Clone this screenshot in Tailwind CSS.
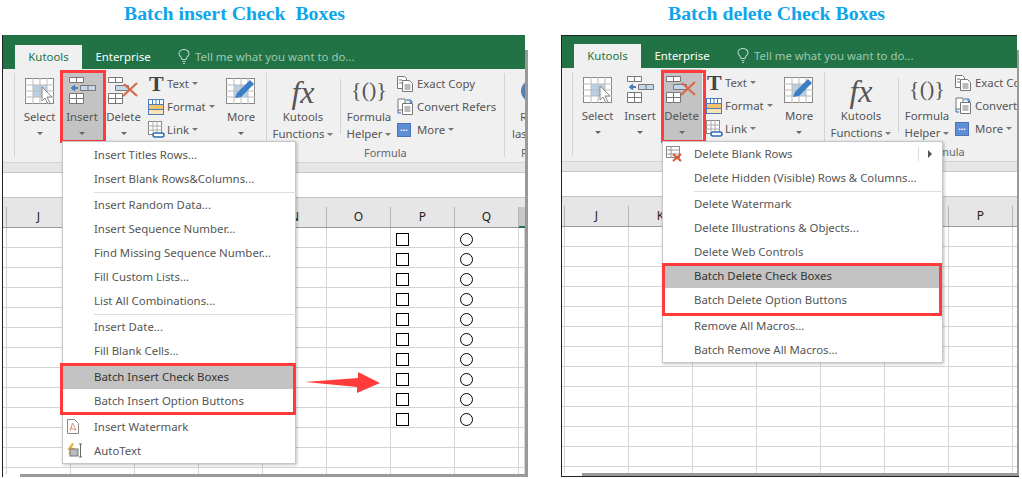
<!DOCTYPE html>
<html lang="en">
<head>
<meta charset="UTF-8">
<script src="https://cdn.jsdelivr.net/npm/@tailwindcss/browser@4"></script>
<title>Batch Check Boxes</title>
</head>
<body class="bg-white w-[1022px] h-[479px] overflow-hidden font-['Noto_Sans',sans-serif] text-[11.4px] text-[#555]">
<div class="relative flex h-[479px]">

  <!-- left half: insert -->
  <div class="w-[560px] shrink-0">
    <div class="h-[35px] pl-[124px] font-['Liberation_Serif',serif] font-bold text-[19.800px] leading-[26px] text-[#0ea5e9] whitespace-pre">Batch insert Check  Boxes</div>
    <div id="winL" class="relative ml-[2px] w-[523px] h-[439px] border-l border-[#222] bg-white overflow-hidden"></div>
    <!-- window shadow -->
    <div class="absolute left-[525px] top-[50px] w-[3px] h-[427px] bg-[#999]"></div>
    <div class="absolute left-[20px] top-[474px] w-[505px] h-[3px] bg-[#999]"></div>
    <div class="absolute left-[2px] top-[474px] w-[1px] h-[3px] bg-[#222]"></div>
  </div>

  <!-- right half: delete -->
  <div class="w-[462px] shrink-0">
    <div class="h-[35px] pl-[108px] font-['Liberation_Serif',serif] font-bold text-[19.800px] leading-[26px] text-[#0ea5e9]">Batch delete Check Boxes</div>
    <div id="winR" class="relative ml-[1px] w-[456px] h-[438px] border-l border-t border-[#222] bg-white overflow-hidden"></div>
    <div class="absolute left-[1017px] top-[50px] w-[2px] h-[426px] bg-[#999]"></div>
    <div class="absolute left-[582px] top-[473px] w-[437px] h-[3px] bg-[#999]"></div>
    <div class="absolute left-[561px] top-[473px] w-[458px] h-[4px] border-b border-[#222] border-l"></div>
  </div>

  <!-- arrow from the menu to the new controls -->
  <svg class="absolute left-[300px] top-[365px]" width="90" height="35" viewBox="300 365 90 35"><path d="M305 382 358 378V372L380 383 357 393V387Z" fill="#ff3b3b"/></svg>
</div>

<script>
  // ribbon icons
  var icoSelect = '<svg width="30" height="27" viewBox="0 0 30 27" class="ml-[1px] mt-[1px]"><rect x=".5" y=".5" width="28" height="25" fill="#fff" stroke="#888"/><rect x="8" y="7" width="14" height="12" fill="#b8cfe6"/><path d="M0 7h29M0 13h29M0 19h29M8 0v26M15 0v26M22 0v26" stroke="#bbb"/><path d="M17 9v14l3-3 3 6 2-1-3-6h5z" fill="#fff" stroke="#888"/></svg>';
  var icoInsert = '<svg width="27" height="27" viewBox="0 0 27 27" fill="#fff" stroke="#777"><path d="M.5.500h14v5H.5zM7.500 0v6"/><path d="M11.500 8.500h15v5h-15zM19 8v6" fill="#c5d7ea"/><path d="M9 11H3m3-2.500L3 11l3 2.500" stroke="#4a7ebb" stroke-width="1.800" fill="none"/><path d="M.5 16.500h14v10H.5zM.5 21.500h14M7.500 16v11"/></svg>';
  var icoDelete = '<svg width="31" height="27" viewBox="0 0 31 27" fill="#fff" stroke="#777"><path d="M.5.500h14v5H.5zM7.500 0v6"/><path d="M7.500 8.500h13v5h-13z" fill="#c5d7ea"/><path d="M.5 16.500h14v10H.5zM.5 21.500h14M7.500 16v11"/><path d="M16 7l13 12M29 6 15 19" stroke="#d9694a" stroke-width="2.200"/></svg>';
  var icoMore = '<svg width="30" height="27" viewBox="0 0 30 27" class="mt-[1px]"><rect x=".5" y=".5" width="28" height="25" fill="#fff" stroke="#888"/><rect x="8" y="7" width="14" height="12" fill="#b8cfe6"/><path d="M0 7h29M0 13h29M0 19h29M8 0v26M15 0v26M22 0v26" stroke="#bbb"/><path d="M9 20l2-5L24 2l4 4-13 13z" fill="#3a7fc4"/></svg>';
  var icoFormat = '<svg width="16" height="16" viewBox="0 0 16 16"><rect width="16" height="16" fill="#4a7ebb"/><rect x="1" y="1" width="14" height="4" fill="#fff"/><path d="M4.500 1v4M8 1v4M11.500 1v4" stroke="#4a7ebb"/><rect x="1" y="6" width="14" height="4" fill="#f5c26b"/><rect x="1" y="11" width="14" height="4" fill="#fbe3b8"/></svg>';
  var icoLink = '<svg width="17" height="17" viewBox="0 0 17 17"><rect x=".5" y=".5" width="13" height="13" fill="#fff" stroke="#888"/><path d="M5 0v14M9 0v14M0 5h14M0 9h14" stroke="#aaa"/><rect x="5" y="12" width="11" height="4" rx="2" fill="#fff" stroke="#2a6db0" stroke-width="1.500"/></svg>';
  var icoCopy = '<svg width="16" height="16" viewBox="0 0 16 16" fill="#fff" stroke="#777"><path d="M.5.500h7l2 2v10h-9z"/><path d="M5.500 4.500h7l3 3v8h-10z"/><path d="M7.500 9h6M7.500 11h6M7.500 13h6M2 4h3M2 7h3" fill="none"/></svg>';
  var icoRefs = '<svg width="16" height="17" viewBox="0 0 16 17" fill="#fff" stroke="#777"><path d="M1 1h7v11H1z"/><path d="M5.500 5.500h10v11h-10z"/><path d="M7.500 9h6M7.500 11h6M7.500 13h6" fill="none"/><path d="M9 2h5v3M12.500 3.500 14 5l1.500-1.500M1 12v3h3" stroke="#2a6db0" fill="none"/></svg>';
  var icoDots = '<span class="block w-[14px] h-[14px] bg-[#5f8ed6] border border-[#4a76b8] text-white text-[9px] leading-[11px] text-center font-bold">···</span>';
  var bulb = '<svg width="12" height="16" viewBox="0 0 12 16" fill="none" stroke="#b5d3c3" stroke-width="1.100"><path d="M4 10.500c0-2.300-3-3.300-3-5.800a5 4.200 0 0 1 10 0c0 2.500-3 3.500-3 5.800z"/><path d="M4.500 12.500h3M5 14.500h2"/></svg>';
  var caret = '<span class="inline-block w-0 h-0 border-x-[3px] border-t-[3px] border-x-transparent border-t-[#777] ml-[3px] align-middle"></span>';
  var drop = '<span class="h-[16px] flex items-center"><span class="w-0 h-0 border-x-[3px] border-t-[3px] border-x-transparent border-t-[#666]"></span></span>';

  function bigBtn(label, icon, width, on) {
    return '<div class="' + width + ' h-[73px] mt-[1px] pt-[7px] flex flex-col items-center shrink-0 ' + (on ? 'bg-[#c3c3c3]' : '') + '">' +
      '<div class="h-[32px] flex justify-center items-start">' + icon + '</div>' +
      '<span class="leading-[16px]">' + label + '</span>' + drop + '</div>';
  }
  function smallRow(icon, label, more) {
    return '<div class="h-[23px] flex items-center whitespace-nowrap"><span class="w-[20px] shrink-0">' + icon + '</span><span>' + label + '</span>' + (more ? caret : '') + '</div>';
  }
  function tallBtn(glyph, width, l1, l2) {
    return '<div class="' + width + ' h-[73px] mt-[1px] pt-[7px] flex flex-col items-center shrink-0 whitespace-nowrap">' +
      '<div class="h-[32px]">' + glyph + '</div><span class="leading-[16px]">' + l1 + '</span><span class="leading-[17px]">' + l2 + caret + '</span></div>';
  }

  function ribbon(active, pad) {
    return '<div class="h-[93px] bg-[#f0f0f0] flex items-start text-[#555] relative">' +
      '<div class="' + pad + ' h-[84px] mt-[4px] border-r border-[#d4d4d4] shrink-0"></div>' +
      '<div class="w-[3px] shrink-0"></div>' +
      bigBtn('Select', icoSelect, 'w-[43px]', false) +
      bigBtn('Insert', icoInsert, 'w-[42px]', active == 'Insert') +
      bigBtn('Delete', icoDelete, 'w-[41px]', active == 'Delete') +
      '<div class="w-[78px] mt-[3px] pl-[4px] shrink-0">' +
        '<div class="h-[23px] flex items-center"><span class="w-[19px] pl-[1px] font-[\'Liberation_Serif\',serif] font-bold text-[22px] leading-[20px] text-[#444]">T</span><span>Text</span>' + caret + '</div>' +
        '<div class="h-[23px] flex items-center"><span class="w-[19px]">' + icoFormat + '</span><span>Format</span>' + caret + '</div>' +
        '<div class="h-[23px] flex items-center"><span class="w-[19px]">' + icoLink + '</span><span>Link</span>' + caret + '</div>' +
      '</div>' +
      bigBtn('More', icoMore, 'w-[38px]', false) +
      '<div class="w-[7px] h-[84px] mt-[4px] border-r border-[#d4d4d4] shrink-0"></div>' +
      tallBtn('<span class="font-[\'Liberation_Serif\',serif] italic text-[32px] leading-[30px] text-[#555]">fx</span>', 'w-[72px]', 'Kutools', 'Functions') +
      '<div class="w-[2px] h-[55px] mt-[10px] border-r border-[#d4d4d4] shrink-0"></div>' +
      tallBtn('<span class="font-[\'Liberation_Serif\',serif] text-[22px] leading-[26px] text-[#555]">{()}</span>', 'w-[56px]', 'Formula', 'Helper') +
      '<div class="relative w-[106px] mt-[3px] shrink-0">' +
        smallRow(icoCopy, 'Exact Copy') + smallRow(icoRefs, 'Convert Refers') + smallRow(icoDots, 'More', true) +
        '<span class="absolute left-[-33px] top-[73px] leading-[16px] text-[10.900px] text-[#666]">Formula</span>' +
      '</div>' +
      '<div class="w-[2px] h-[84px] mt-[4px] border-r border-[#d4d4d4] shrink-0"></div>' +
      '<div class="relative shrink-0 w-[40px] h-[93px]">' +
        '<span class="absolute left-[16px] top-[11px] w-[24px] h-[22px] rounded-full bg-[#5a7fb5]"></span>' +
        '<span class="absolute left-[15px] top-[40px] leading-[16px]">R</span><span class="absolute left-[7px] top-[57px] leading-[16px]">las</span>' +
        '<span class="absolute left-[16px] top-[76px] leading-[16px] text-[10.900px] text-[#666]">F</span>' +
      '</div>' +
    '</div>';
  }

  function sheetHead(first, letters, selected) {
    var h = '<div class="h-[11px] bg-[#e6e6e6] border-t border-b border-t-[#d4d4d4] border-b-[#c6c6c6]"></div><div class="h-[24px] bg-white"></div>';
    h += '<div class="h-[31px] bg-[#e6e6e6] border-t border-b border-t-[#c0c0c0] border-b-[#9a9a9a] pt-[9px] flex text-[#222] leading-[20px] text-[12px]">';
    h += '<div class="' + first + ' border-r border-[#b5b5b5] shrink-0"></div>';
    letters.forEach(function (l) {
      h += '<div class="w-[64px] border-r border-[#b5b5b5] text-center shrink-0">' + l + '</div>';
    });
    if (selected) h += '<div class="grow -mb-[1px] bg-[#c8c8c8] border-b-2 border-[#217346]"></div>';
    return h + '</div>';
  }

  function sheetRows(gridCols, controls) {
    var h = '<div class="grid ' + gridCols + ' auto-rows-[20px]">';
    for (var r = 0; r < 13; r++) {
      for (var c = 0; c < 10; c++) {
        var inner = '';
        if (controls && r < 10 && c == 7) inner = '<span class="block w-[13px] h-[13px] border border-black ml-[5px] mt-[5px]"></span>';
        if (controls && r < 10 && c == 8) inner = '<span class="block w-[13px] h-[13px] border border-black rounded-full ml-[5px] mt-[5px]"></span>';
        h += '<div class="border-b border-r border-[#d4d4d4]">' + inner + '</div>';
      }
    }
    return h + '</div>';
  }

  function tabs(greenH) {
    return '<div class="' + greenH + ' bg-[#217346] flex items-end pl-[12px] leading-[24px]">' +
      '<div class="w-[67px] h-[24px] bg-[#f0f0f0] text-[#217346] text-center">Kutools</div>' +
      '<div class="w-[82px] h-[24px] text-white text-center">Enterprise</div>' +
      '<div class="h-[24px] flex items-center text-[#9fc8b0] pl-[14px] gap-[5px]">' + bulb + '<span class="whitespace-nowrap">Tell me what you want to do...</span></div>' +
    '</div>';
  }

  var frame = 'absolute border-[3px] border-[#ff3b3b]';
  var sep = '<div class="h-[1px] bg-[#ddd] mt-[1px] -mr-[1px]"></div>';
  function item(t) { return '<div class="h-[24px]">' + t + '</div>'; }
  function hot(t) { return '<div class="h-[24px] -ml-[31px] pl-[31px] bg-[#c3c3c3] text-[#333] mt-[2px]">' + t + '</div>'; }

  var icoWater = '<svg class="absolute left-[-27px] top-[4px]" width="12" height="15" viewBox="0 0 12 15" fill="#fff" stroke="#888"><path d="M.5.500h7l4 4v10H.5z"/><path d="M3 12l2.500-8L9 11 3 9" stroke="#e08a7a" fill="none"/></svg>';
  var icoAuto = '<svg class="absolute left-[-28px] top-[4px]" width="17" height="15" viewBox="0 0 17 15"><path d="M6 0 1 7h3l-2 5 7-7H6l2-5z" fill="#f0b13c"/><rect x="4" y="6" width="8" height="7" fill="#bbb" stroke="#777"/><path d="M13 1h3M13 14h3M14.500 1v13" stroke="#666" fill="none"/></svg>';
  var icoBlank = '<svg class="absolute left-[-28px] top-[4px]" width="17" height="16" viewBox="0 0 17 16"><rect x=".5" y=".5" width="13" height="11" fill="#fff" stroke="#888"/><path d="M0 4h14M0 8h14M5 0v12" stroke="#999"/><path d="M7 8l8 7M15 8l-8 7" stroke="#d9593a" stroke-width="2.200"/></svg>';

  document.getElementById('winL').innerHTML =
    tabs('h-[34px]') + ribbon('Insert', 'w-[12px]') +
    sheetHead('w-[4px]', ['J', '', '', '', 'N', 'O', 'P', 'Q'], true) +
    sheetRows('grid-cols-[4px_repeat(8,64px)_1fr]', true) +
    '<div class="' + frame + ' left-[57px] top-[35px] w-[46px] h-[73px]"></div>' +
    '<div class="absolute left-[59px] top-[106px] w-[234px] h-[323px] bg-white border border-[#c6c6c6] shadow-[1px_1px_3px_rgba(0,0,0,0.25)] pl-[31px] pt-[1px] leading-[24px] whitespace-nowrap">' +
      item('Insert Titles Rows...') + item('Insert Blank Rows&amp;Columns...') + sep +
      item('Insert Random Data...') + item('Insert Sequence Number...') + item('Find Missing Sequence Number...') + item('Fill Custom Lists...') + item('List All Combinations...') + sep +
      item('Insert Date...') + item('Fill Blank Cells...') +
      hot('Batch Insert Check Boxes') + item('Batch Insert Option Buttons') +
      '<div class="h-[24px] mt-[2px] relative">Insert Watermark' + icoWater + '</div>' +
      '<div class="h-[24px] relative">AutoText' + icoAuto + '</div>' +
    '</div>' +
    '<div class="' + frame + ' left-[57px] top-[328px] w-[236px] h-[52px]"></div>';

  document.getElementById('winR').innerHTML =
    tabs('h-[32px]') + ribbon('Delete', 'w-[11px]') +
    sheetHead('w-[3px]', ['J', 'K', '', '', '', '', 'P'], false) +
    sheetRows('grid-cols-[3px_repeat(8,64px)_1fr]', false) +
    '<div class="' + frame + ' left-[99px] top-[34px] w-[45px] h-[73px]"></div>' +
    '<div class="absolute left-[100px] top-[105px] w-[281px] h-[222px] bg-white border border-[#c6c6c6] shadow-[1px_1px_3px_rgba(0,0,0,0.25)] pl-[31px] leading-[24px] whitespace-nowrap">' +
      '<div class="h-[24px] relative">Delete Blank Rows' + icoBlank +
        '<span class="absolute left-[224px] top-[5px] w-[1px] h-[14px] bg-[#ddd]"></span>' +
        '<span class="absolute left-[234px] top-[8px] w-0 h-0 border-y-[4px] border-l-[4px] border-y-transparent border-l-[#555]"></span></div>' +
      item('Delete Hidden (Visible) Rows &amp; Columns...') + sep +
      item('Delete Watermark') + item('Delete Illustrations &amp; Objects...') + item('Delete Web Controls') +
      '<div class="h-[24px] -ml-[31px] pl-[31px] bg-[#c3c3c3] text-[#333]">Batch Delete Check Boxes</div>' + item('Batch Delete Option Buttons') + sep +
      item('Remove All Macros...') + item('Batch Remove All Macros...') +
    '</div>' +
    '<div class="' + frame + ' left-[100px] top-[227px] w-[280px] h-[53px]"></div>';
</script>
</body>
</html>
